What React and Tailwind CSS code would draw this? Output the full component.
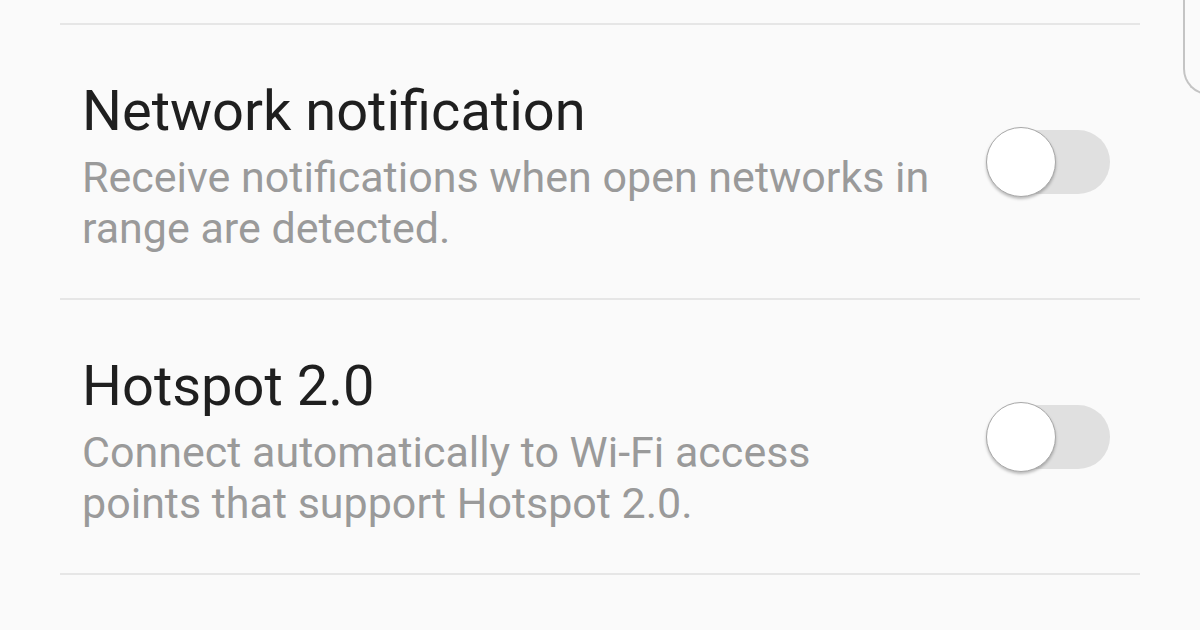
import React from 'react';

const rows = [
  {
    title: 'Network notification',
    lines: ['Receive notifications when open networks in', 'range are detected.'],
  },
  {
    title: 'Hotspot 2.0',
    lines: ['Connect automatically to Wi-Fi access', 'points that support Hotspot 2.0.'],
  },
];

function Toggle() {
  return (
    <div className="relative w-[124px] h-[70px] flex items-center">
      <div className="ml-[4px] w-[120px] h-[64px] rounded-full bg-[#e0e0e0]" />
      <div className="absolute left-0 top-0 w-[70px] h-[70px] rounded-full bg-white border-[1.5px] border-[#a8a8a8] shadow-[0_2px_3px_rgba(0,0,0,0.25)]" />
    </div>
  );
}

export default function App() {
  return (
    <div className="relative w-[1200px] h-[630px] overflow-hidden bg-[#fafafa] font-['Roboto',sans-serif]">
      <div className="mx-[60px] pt-[23px]">
        <div className="h-[2px] bg-[#e6e6e6]" />
        {rows.map((row) => (
          <div key={row.title}>
            <div className="flex h-[273px] pl-[22px] pr-[30px]">
              <div className="flex-1 pt-[56px] whitespace-nowrap">
                <div className="text-[56px] leading-[60px] text-[#1f1f1f]">{row.title}</div>
                <div className="mt-[11px] text-[43px] leading-[51px] text-[#9a9a9a]">
                  {row.lines.map((l) => (
                    <div key={l}>{l}</div>
                  ))}
                </div>
              </div>
              <div className="self-center">
                <Toggle />
              </div>
            </div>
            <div className="h-[2px] bg-[#e6e6e6]" />
          </div>
        ))}
      </div>
      <div className="absolute left-[1183px] top-[-30px] w-[40px] h-[125px] border-l-2 border-b-2 border-[#c4c4c4] rounded-bl-[26px]" />
    </div>
  );
}
